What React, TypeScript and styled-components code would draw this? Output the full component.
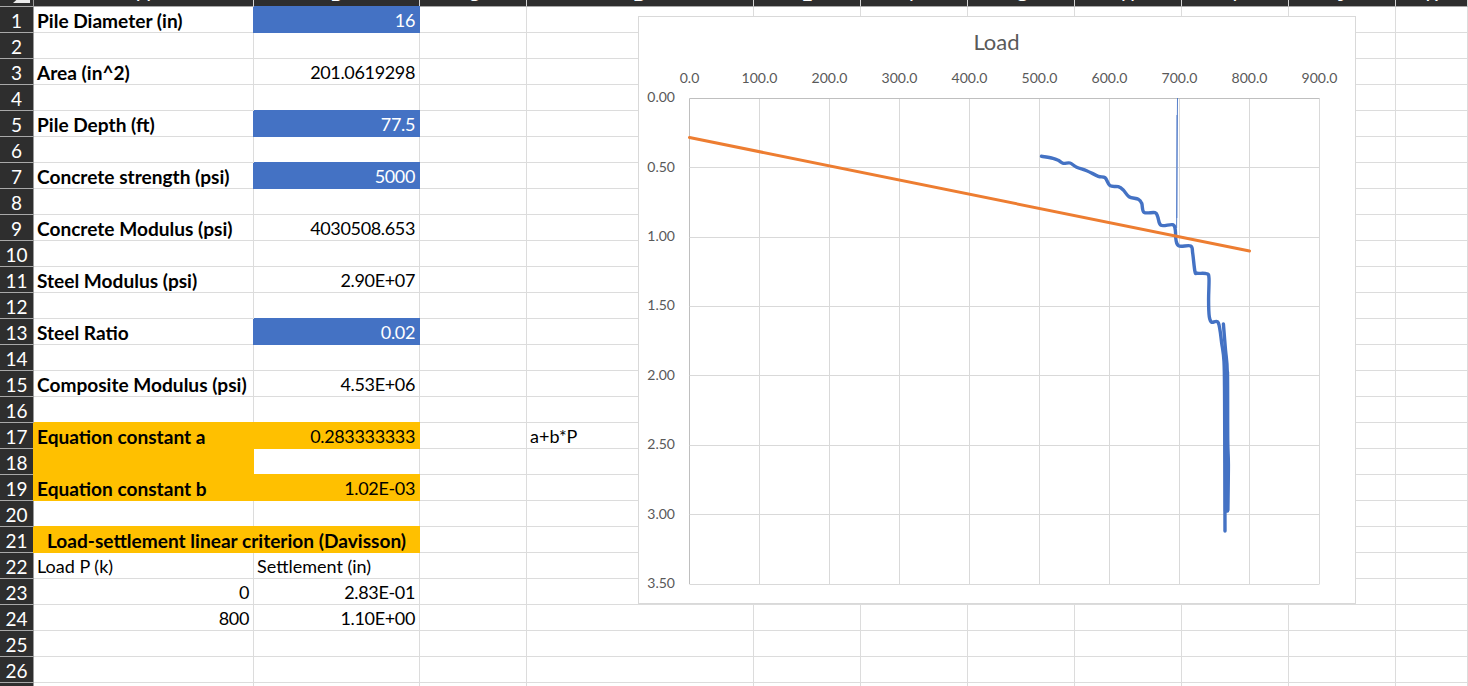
import * as React from "react";
import styled, { createGlobalStyle } from "styled-components";

const BLUE = "#4472c4";
const AMBER = "#ffc000";
const GRID = "#dcdcdc";
const FONT = `Lato, "Open Sans", "Liberation Sans", sans-serif`;

const GlobalStyle = createGlobalStyle`
    html, body {
        margin: 0;
        height: 686px;
        overflow: hidden;
        background: #ffffff;
    }
`;

const Page = styled.div`
    position: relative;
    width: 1468px;
    height: 686px;
    overflow: hidden;
    font-family: ${FONT};
`;

const Sheet = styled.div`
    display: grid;
    grid-template-columns: 34px 220px 166px 107px 227px repeat(6, 107px) 72px;
    grid-template-rows: 7px;
    grid-auto-rows: 26px;
`;

const Corner = styled.div`
    background: #2e2e2e;
    border-right: 1px solid #9a9a9a;
    border-bottom: 1px solid #a8a8a8;
    box-sizing: border-box;

    &::before {
        content: "";
        display: block;
        width: 17px;
        height: 3px;
        margin-left: 13px;
        background: #ececec;
        clip-path: polygon(20% 0, 100% 0, 100% 100%, 0 100%);
    }
`;

const ColumnHead = styled.div`
    display: flex;
    justify-content: center;
    overflow: hidden;
    box-sizing: border-box;
    background: #2e2e2e;
    color: #ffffff;
    font-size: 19px;
    line-height: 24px;
    border-right: 1px solid #d4d4d4;
    border-bottom: 1px solid #a8a8a8;

    span {
        margin-top: -18px;
    }
`;

const RowHead = styled.div`
    box-sizing: border-box;
    padding-top: 1px;
    background: #2e2e2e;
    color: #ffffff;
    font-size: 19px;
    line-height: 25px;
    text-align: center;
    border-right: 1px solid #9a9a9a;
    border-bottom: 1px solid #a8a8a8;
`;

const Cell = styled.div<{ $fill?: string; $bold?: boolean; $align?: string; $span?: number; $light?: boolean }>`
    box-sizing: border-box;
    grid-column: span ${(p) => p.$span ?? 1};
    padding: 1px ${(p) => (p.$align === "right" ? "4px" : "3px")} 0 3px;
    font-size: ${(p) => (p.$bold ? "19.1px" : "18px")};
    letter-spacing: ${(p) => (!p.$bold && p.$align === "right" ? "-0.35px" : "normal")};
    line-height: 25px;
    white-space: nowrap;
    overflow: visible;
    text-align: ${(p) => p.$align ?? "left"};
    font-weight: ${(p) => (p.$bold ? 700 : 400)};
    color: ${(p) => (p.$light ? "#ffffff" : "#000000")};
    background: ${(p) => p.$fill ?? "#ffffff"};
    border-right: 1px solid ${(p) => p.$fill ?? GRID};
    border-bottom: 1px solid ${(p) => p.$fill ?? GRID};
    box-shadow: ${(p) => (p.$fill ? `0 -1px 0 ${p.$fill}, -1px 0 0 ${p.$fill}` : "none")};
`;

const ChartFrame = styled.div`
    position: absolute;
    left: 638px;
    top: 16px;
    width: 718px;
    height: 588px;
    box-sizing: border-box;
    background: #ffffff;
    border: 1px solid #d9d9d9;
`;

const ChartSvg = styled.svg`
    display: block;
    width: 716px;
    height: 586px;
    font-family: ${FONT};
    fill: #595959;
`;

type CellData = {
    text?: string;
    fill?: string;
    bold?: boolean;
    align?: string;
    span?: number;
    light?: boolean;
};

const label = (text: string): CellData => ({ text, bold: true });
const value = (text: string): CellData => ({ text, align: "right" });
const input = (text: string): CellData => ({ text, align: "right", fill: BLUE, light: true });

// only columns A to D hold anything, the rest of every row is blank
const ROWS: Record<number, CellData[]> = {
    1: [label("Pile Diameter (in)"), input("16")],
    3: [label("Area (in^2)"), value("201.0619298")],
    5: [label("Pile Depth (ft)"), input("77.5")],
    7: [label("Concrete strength (psi)"), input("5000")],
    9: [label("Concrete Modulus (psi)"), value("4030508.653")],
    11: [label("Steel Modulus (psi)"), value("2.90E+07")],
    13: [label("Steel Ratio"), input("0.02")],
    15: [label("Composite Modulus (psi)"), value("4.53E+06")],
    17: [
        { text: "Equation constant a", bold: true, fill: AMBER },
        { text: "0.283333333", align: "right", fill: AMBER },
        {},
        { text: "a+b*P" },
    ],
    18: [{ fill: AMBER }, {}],
    19: [
        { text: "Equation constant b", bold: true, fill: AMBER },
        { text: "1.02E-03", align: "right", fill: AMBER },
    ],
    21: [{ text: "Load-settlement linear criterion (Davisson)", bold: true, fill: AMBER, align: "center", span: 2 }],
    22: [{ text: "Load P (k)" }, { text: "Settlement (in)" }],
    23: [value("0"), value("2.83E-01")],
    24: [value("800"), value("1.10E+00")],
};

const COLUMNS = "ABCDEFGHIJK".split("");
const ROW_COUNT = 27;
const CELLS_PER_ROW = 11;

const X_TICKS = [0, 100, 200, 300, 400, 500, 600, 700, 800, 900];
const Y_TICKS = [0, 0.5, 1, 1.5, 2, 2.5, 3, 3.5];

const xAt = (load: number) => 689.5 + load * 0.7;
const yAt = (settlement: number) => 98.2 + settlement * 138.86;
const gridY = (settlement: number) => Math.floor(yAt(settlement)) + 0.5;

const CURVE: [number, number][] = [
    [1041.5, 156.3], [1053, 158.3], [1058.3, 160.3], [1063.3, 163.3], [1070, 163], [1076.7, 167.3],
    [1086.7, 170.7], [1098.3, 176.3], [1105, 177.7], [1110, 185.7], [1118.3, 186.7], [1123.3, 190],
    [1129, 196.7], [1138.3, 199.3], [1141.7, 203.3], [1144, 212.3], [1155, 212.7], [1157.7, 216.7],
    [1161, 225.3], [1172.7, 224.7], [1175.3, 230], [1176, 240], [1179, 246], [1190.7, 246],
    [1192.7, 253.3], [1195, 271.7], [1197.3, 273.3], [1206.7, 273.7], [1209, 278.3], [1208.6, 300],
    [1209.3, 316.7], [1211.7, 322.3], [1218.3, 322.7], [1221.7, 343.3], [1224, 361.7], [1224.6, 400],
    [1225, 531],
];

const BAND: [number, number][] = [
    [1223.4, 324], [1225.5, 350], [1227.3, 373], [1227.6, 440], [1228.4, 465], [1227.8, 510],
];

// catmull-rom through the points, the way the spreadsheet smooths a line
const smooth = (pts: [number, number][]) => {
    let d = `M${pts[0][0]} ${pts[0][1]}`;
    for (let i = 0; i < pts.length - 1; i++) {
        const p0 = pts[Math.max(i - 1, 0)];
        const p1 = pts[i];
        const p2 = pts[i + 1];
        const p3 = pts[Math.min(i + 2, pts.length - 1)];
        const c1x = p1[0] + (p2[0] - p0[0]) / 6;
        const c1y = p1[1] + (p2[1] - p0[1]) / 6;
        const c2x = p2[0] - (p3[0] - p1[0]) / 6;
        const c2y = p2[1] - (p3[1] - p1[1]) / 6;
        d += ` C${c1x.toFixed(1)} ${c1y.toFixed(1)} ${c2x.toFixed(1)} ${c2y.toFixed(1)} ${p2[0]} ${p2[1]}`;
    }
    return d;
};

const LoadChart: React.FC = () => (
    <ChartFrame>
        <ChartSvg viewBox="639 17 716 586">
            <text x={996.5} y={50} fontSize={22} textAnchor="middle">
                Load
            </text>

            {X_TICKS.map((tick) => (
                <React.Fragment key={tick}>
                    <line x1={xAt(tick)} x2={xAt(tick)} y1={98.5} y2={584} stroke={tick === 0 ? "#bfbfbf" : "#d9d9d9"} />
                    <text x={xAt(tick)} y={83} fontSize={14} textAnchor="middle">
                        {tick.toFixed(1)}
                    </text>
                </React.Fragment>
            ))}
            {Y_TICKS.map((tick) => (
                <React.Fragment key={tick}>
                    <line x1={689.5} x2={1319.5} y1={gridY(tick)} y2={gridY(tick)} stroke={tick === 0 ? "#bfbfbf" : "#d9d9d9"} />
                    <text x={675} y={yAt(tick) + 4} fontSize={14} textAnchor="end">
                        {tick.toFixed(2)}
                    </text>
                </React.Fragment>
            ))}

            <line x1={1176.8} x2={1176.8} y1={115} y2={218} stroke="#a9bde4" strokeWidth={1.6} />
            <line x1={1177.5} x2={1176.6} y1={98} y2={228} stroke={BLUE} strokeWidth={0.9} />

            <g fill="none" stroke={BLUE} strokeWidth={3.4} strokeLinecap="round" strokeLinejoin="round">
                <path d={smooth(CURVE)} />
                <path d={smooth(BAND)} />
                <path d="M1225.5 372V511M1226.5 372V511M1227.5 372V511" />
            </g>

            <line x1={xAt(0)} y1={yAt(0.2833)} x2={xAt(800)} y2={yAt(1.1)} stroke="#ed7d31" strokeWidth={3} strokeLinecap="round" />
        </ChartSvg>
    </ChartFrame>
);

const SheetRow: React.FC<{ index: number }> = ({ index }) => {
    const cells = ROWS[index] ?? [];
    const used = cells.reduce((sum, cell) => sum + (cell.span ?? 1), 0);
    return (
        <>
            <RowHead>{index}</RowHead>
            {cells.map((cell, i) => (
                <Cell
                    key={i}
                    $fill={cell.fill}
                    $bold={cell.bold}
                    $align={cell.align}
                    $span={cell.span}
                    $light={cell.light}
                >
                    {cell.text}
                </Cell>
            ))}
            {Array.from({ length: CELLS_PER_ROW - used }, (_, i) => (
                <Cell key={`blank-${i}`} />
            ))}
        </>
    );
};

export default function App() {
    return (
        <Page>
            <GlobalStyle />
            <Sheet>
                <Corner />
                {COLUMNS.map((column) => (
                    <ColumnHead key={column}>
                        <span>{column}</span>
                    </ColumnHead>
                ))}
                {Array.from({ length: ROW_COUNT }, (_, i) => (
                    <SheetRow key={i} index={i + 1} />
                ))}
            </Sheet>
            <LoadChart />
        </Page>
    );
}
